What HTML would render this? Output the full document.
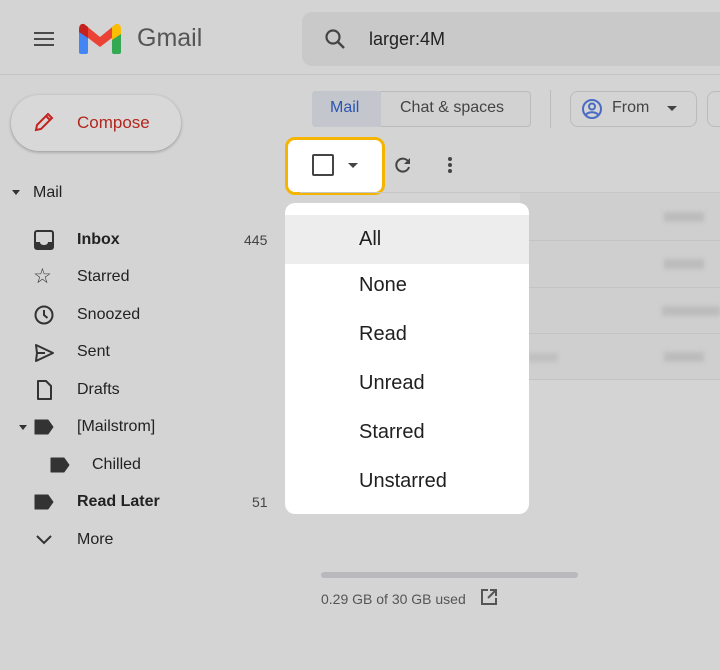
<!DOCTYPE html>
<html><head><style>
*{margin:0;padding:0;box-sizing:border-box}
body{width:720px;height:670px;background:#d4d4d4;font-family:"Liberation Sans",Arial,sans-serif;position:relative;overflow:hidden;color:#1f1f1f}
.a{position:absolute}
.nav{position:absolute;left:77px;font-size:16px;color:#222}
.ic{position:absolute;left:33px}
.menu div{height:49px;line-height:49px;padding-left:74px;font-size:20px;color:#1f1f1f}
</style></head><body>
<div class="a" style="left:0;top:74px;width:720px;height:1px;background:#c4c4c4"></div>
<div class="a" style="left:34px;top:32px;width:20px;height:2px;background:#4a4a4a;box-shadow:0 6px 0 #4a4a4a,0 12px 0 #4a4a4a"></div>
<svg class="a" style="left:78px;top:22px" width="44" height="32" viewBox="0 0 44 32">
<rect x="1" y="7" width="9" height="25" rx="2" fill="#4285f4"/>
<rect x="34" y="7" width="9" height="25" rx="2" fill="#34a853"/>
<path d="M1 9 L6 2 L22 15 L38 2 L43 9 L22 25Z" fill="#ea4335"/>
<path d="M34 5 L38 2 Q43 1 43 8 L43 12 L34 18Z" fill="#fbbc04"/>
<path d="M1 8 Q1 1 6 2 L10 5 L10 16 L1 10Z" fill="#c5221f"/>
</svg>
<div class="a" style="left:137px;top:24px;font-size:25px;color:#555">Gmail</div>
<div class="a" style="left:302px;top:12px;width:430px;height:54px;background:#c9c9c9;border-radius:10px"></div>
<svg class="a" style="left:323px;top:27px" width="24" height="24" viewBox="0 0 24 24"><circle cx="10" cy="10" r="6.5" fill="none" stroke="#444" stroke-width="2.2"/><path d="M15 15l6 6" stroke="#444" stroke-width="2.4"/></svg>
<div class="a" style="left:369px;top:29px;font-size:18px;color:#222">larger:4M</div>
<div class="a" style="left:11px;top:95px;width:170px;height:56px;border-radius:28px;background:#d8d8d8;box-shadow:0 1px 3px rgba(0,0,0,.3)"></div>
<svg class="a" style="left:32px;top:110px" width="24" height="24" viewBox="0 0 24 24"><path d="M4 20l1-5L16 4l4 4L9 19z M14 6l4 4" fill="none" stroke="#c5221f" stroke-width="2"/></svg>
<div class="a" style="left:77px;top:113px;font-size:17px;color:#b3261e">Compose</div>
<div class="a" style="left:12px;top:190px;border-left:4px solid transparent;border-right:4px solid transparent;border-top:5px solid #333"></div>
<div class="a" style="left:33px;top:184px;font-size:16px;color:#222">Mail</div>
<svg class="ic" style="top:229px" width="22" height="22" viewBox="0 0 22 22"><rect x="2" y="2" width="18" height="18" rx="2" fill="none" stroke="#333" stroke-width="2"/><path d="M2 13h5c0 2 2 3 4 3s4-1 4-3h5v6H2z" fill="#333"/></svg>
<div class="nav" style="top:231px;font-weight:bold">Inbox</div><div class="a" style="left:244px;top:232px;font-size:14px;color:#444">445</div>
<div class="ic" style="top:264px;font-size:21px;color:#333">☆</div><div class="nav" style="top:268px">Starred</div>
<svg class="ic" style="top:304px" width="22" height="22" viewBox="0 0 22 22"><circle cx="11" cy="11" r="8.5" fill="none" stroke="#333" stroke-width="2"/><path d="M11 6v5l3.5 3" fill="none" stroke="#333" stroke-width="2"/></svg>
<div class="nav" style="top:306px">Snoozed</div>
<svg class="ic" style="top:342px" width="22" height="22" viewBox="0 0 22 22"><path d="M3 3l17 8-17 8 1-8z M4 11h8" fill="none" stroke="#333" stroke-width="2" stroke-linejoin="round"/></svg>
<div class="nav" style="top:343px">Sent</div>
<svg class="ic" style="top:379px" width="22" height="22" viewBox="0 0 22 22"><path d="M5 2h8l5 5v13H5z" fill="none" stroke="#333" stroke-width="2" stroke-linejoin="round"/></svg>
<div class="nav" style="top:381px">Drafts</div>
<div class="a" style="left:19px;top:425px;border-left:4px solid transparent;border-right:4px solid transparent;border-top:5px solid #333"></div>
<svg class="ic" style="top:419px" width="22" height="16" viewBox="0 0 22 16"><path d="M2 1h13l5 7-5 7H2z" fill="#333" stroke="#333" stroke-linejoin="round"/></svg>
<div class="nav" style="top:418px">[Mailstrom]</div>
<svg class="a" style="left:49px;top:457px" width="22" height="16" viewBox="0 0 22 16"><path d="M2 1h13l5 7-5 7H2z" fill="#333" stroke="#333" stroke-linejoin="round"/></svg>
<div class="nav" style="top:456px;left:92px">Chilled</div>
<svg class="ic" style="top:494px" width="22" height="16" viewBox="0 0 22 16"><path d="M2 1h13l5 7-5 7H2z" fill="#333" stroke="#333" stroke-linejoin="round"/></svg>
<div class="nav" style="top:493px;font-weight:bold">Read Later</div><div class="a" style="left:252px;top:494px;font-size:14px;color:#444">51</div>
<svg class="ic" style="top:531px" width="22" height="18" viewBox="0 0 22 18"><path d="M4 5l7 7 7-7" fill="none" stroke="#333" stroke-width="2"/></svg>
<div class="nav" style="top:531px">More</div>
<div class="a" style="left:312px;top:91px;width:219px;height:36px;border:1px solid #bbb;border-radius:4px;background:#d2d2d2"></div>
<div class="a" style="left:312px;top:91px;width:69px;height:36px;background:#c3c6cd;border-radius:4px 0 0 4px"></div>
<div class="a" style="left:330px;top:99px;font-size:16px;color:#2b55b0">Mail</div>
<div class="a" style="left:400px;top:99px;font-size:16px;color:#444">Chat &amp; spaces</div>
<div class="a" style="left:550px;top:90px;width:1px;height:38px;background:#bbb"></div>
<div class="a" style="left:570px;top:91px;width:127px;height:36px;border:1px solid #bbb;border-radius:8px"></div>
<svg class="a" style="left:581px;top:98px" width="22" height="22" viewBox="0 0 22 22"><circle cx="11" cy="11" r="9" fill="none" stroke="#4a6bc4" stroke-width="2"/><circle cx="11" cy="8.5" r="3" fill="none" stroke="#4a6bc4" stroke-width="2"/><path d="M5 16.5c3-3 9-3 12 0" fill="none" stroke="#4a6bc4" stroke-width="2"/></svg>
<div class="a" style="left:612px;top:99px;font-size:16px;color:#444">From</div>
<div class="a" style="left:667px;top:106px;border-left:5px solid transparent;border-right:5px solid transparent;border-top:5px solid #444"></div>
<div class="a" style="left:707px;top:91px;width:30px;height:36px;border:1px solid #bbb;border-radius:8px"></div>
<div class="a" style="left:285px;top:137px;width:100px;height:58px;border:3px solid #f5b400;border-radius:10px;background:#fff"></div>
<div class="a" style="left:312px;top:154px;width:22px;height:22px;border:2px solid #444;border-radius:2px"></div>
<div class="a" style="left:348px;top:163px;border-left:5px solid transparent;border-right:5px solid transparent;border-top:5px solid #444"></div>
<svg class="a" style="left:392px;top:154px" width="22" height="22" viewBox="0 0 22 22"><path d="M16.5 8A6.5 6.5 0 1 0 17 13" fill="none" stroke="#444" stroke-width="2"/><path d="M18 4v6h-6z" fill="#444"/></svg>
<div class="a" style="left:448px;top:157px;width:4px;height:4px;border-radius:2px;background:#444;box-shadow:0 6px 0 #444,0 12px 0 #444"></div>
<div class="a" style="left:300px;top:192px;width:420px;height:1px;background:#c6c6c6"></div>
<div class="a" style="left:520px;top:193px;width:200px;height:187px;background:#cfcfcf"></div>
<div class="a" style="left:520px;top:240px;width:200px;height:1px;background:#c4c4c4"></div>
<div class="a" style="left:520px;top:287px;width:200px;height:1px;background:#c4c4c4"></div>
<div class="a" style="left:520px;top:333px;width:200px;height:1px;background:#c4c4c4"></div>
<div class="a" style="left:520px;top:379px;width:200px;height:1px;background:#c4c4c4"></div>
<div class="a" style="left:664px;top:212px;width:40px;height:10px;background:#bcbcbc;filter:blur(2px)"></div>
<div class="a" style="left:664px;top:259px;width:40px;height:10px;background:#bcbcbc;filter:blur(2px)"></div>
<div class="a" style="left:662px;top:306px;width:58px;height:10px;background:#bcbcbc;filter:blur(2px)"></div>
<div class="a" style="left:664px;top:352px;width:40px;height:10px;background:#bcbcbc;filter:blur(2px)"></div>
<div class="a" style="left:528px;top:353px;width:30px;height:9px;background:#c0c0c0;filter:blur(2px)"></div>
<div class="a menu" style="left:285px;top:203px;width:244px;height:311px;background:#fff;border-radius:10px;padding-top:12px;overflow:hidden">
<div style="background:#ededed">All</div><div style="margin-top:-3px">None</div><div>Read</div><div>Unread</div><div>Starred</div><div>Unstarred</div>
</div>
<div class="a" style="left:321px;top:572px;width:257px;height:6px;border-radius:3px;background:#b9b9bd"></div>
<div class="a" style="left:321px;top:591px;font-size:14px;color:#555">0.29 GB of 30 GB used</div>
<svg class="a" style="left:480px;top:588px" width="18" height="18" viewBox="0 0 18 18"><path d="M8 2H2v14h14v-6 M10 2h6v6 M16 2L8 10" fill="none" stroke="#555" stroke-width="2"/></svg>
</body></html>
